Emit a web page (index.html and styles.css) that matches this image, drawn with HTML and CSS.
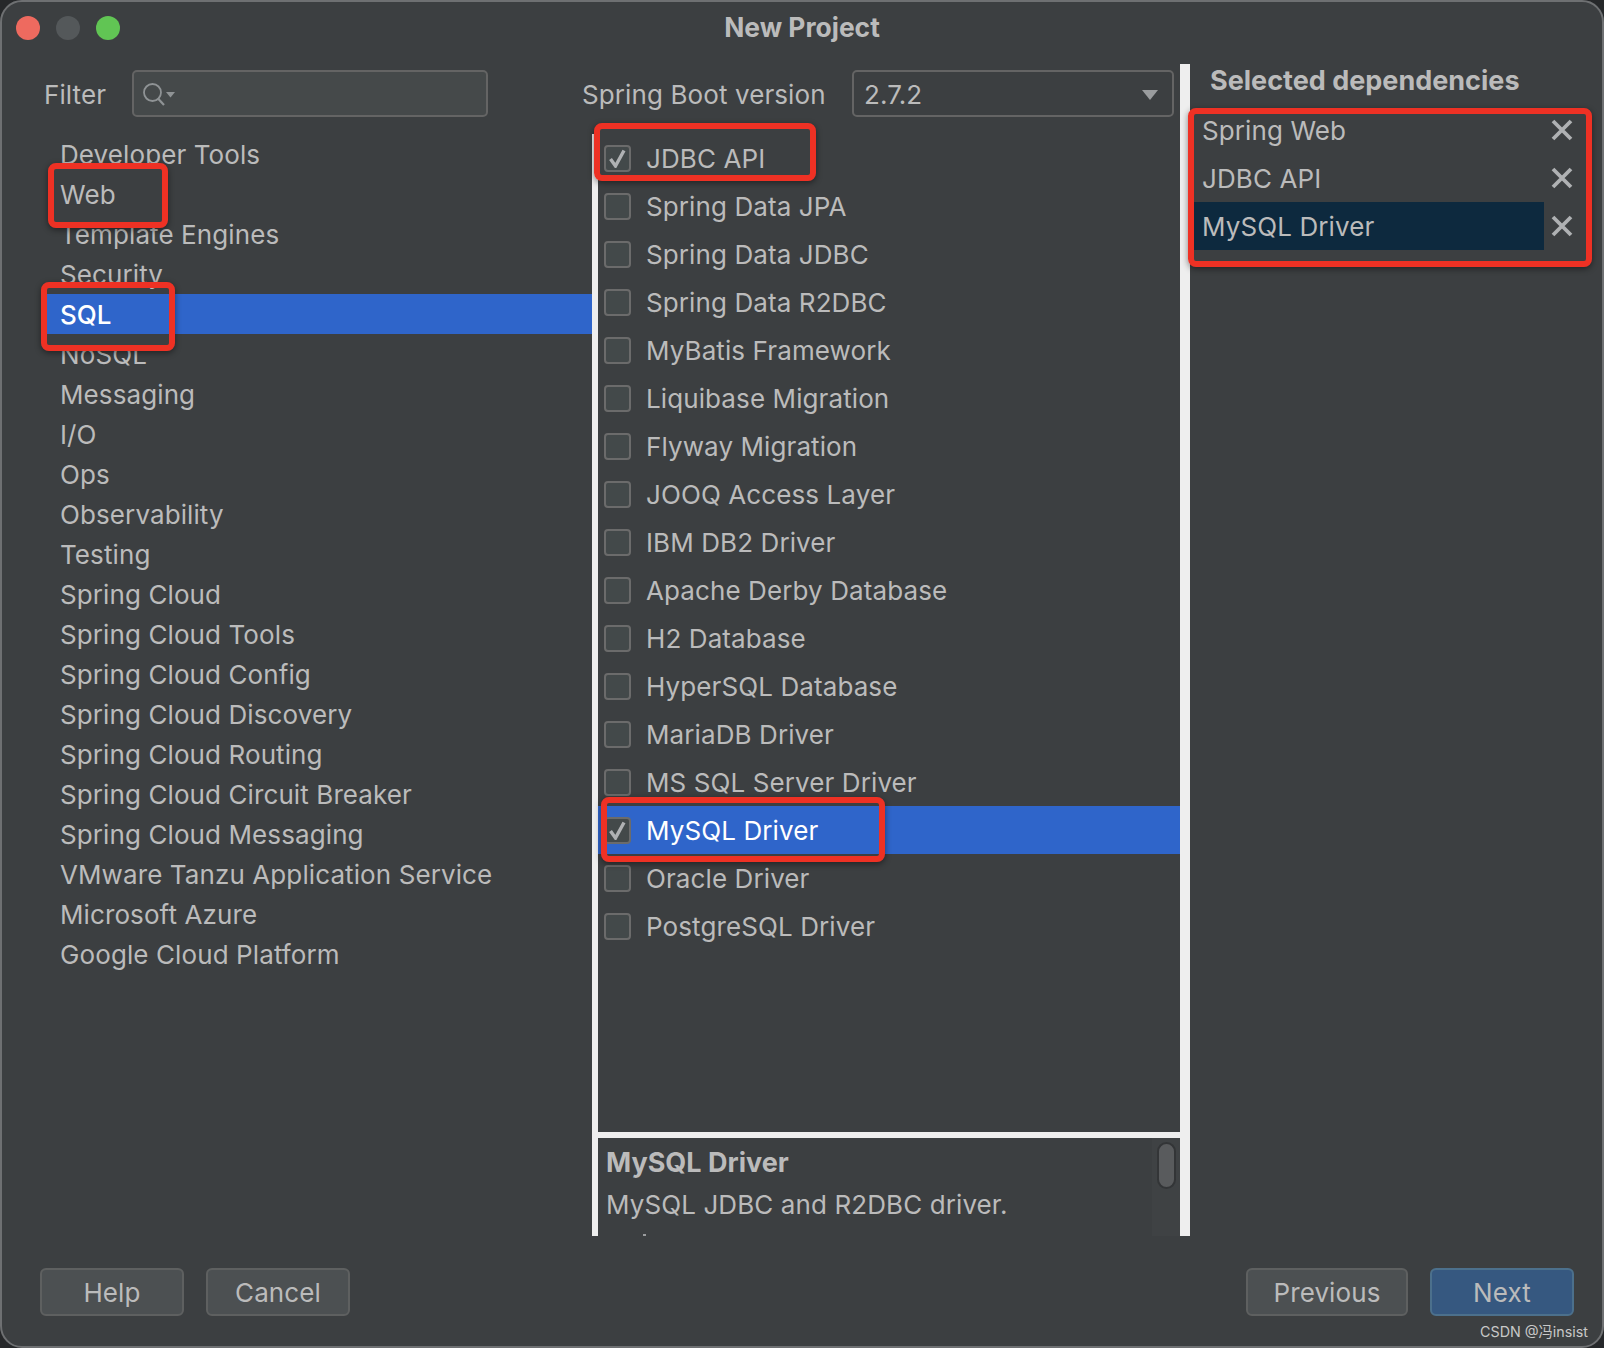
FILE: index.html
```html
<!DOCTYPE html>
<html lang="en">
<head>
    <meta charset="UTF-8">
    <meta name="viewport" content="width=device-width, initial-scale=1.0">
    <title>New Project</title>
    <link rel="stylesheet" href="styles.css">
</head>
<body>
    <div class="window">
        <!-- Title bar -->
        <div class="titlebar">
            <div class="lights">
                <span class="light light-red"></span>
                <span class="light light-gray"></span>
                <span class="light light-green"></span>
            </div>
            <div class="title">New Project</div>
        </div>

        <div class="main">
            <!-- Categories -->
            <div class="categories">
                <div class="filter-row">
                    <span class="filter-label">Filter</span>
                    <div class="search">
                        <svg width="34" height="26" viewBox="0 0 34 26" fill="none">
                            <circle cx="10.5" cy="10.5" r="8.5" stroke="#8f9395" stroke-width="1.8"/>
                            <path d="M16 16.5L22 23" stroke="#8f9395" stroke-width="2.2"/>
                            <path d="M24 10h9l-4.500 5.500z" fill="#8f9395"/>
                        </svg>
                    </div>
                </div>
                <div class="cat-list">
                    <div class="cat">Developer Tools</div>
                    <div class="cat">Web</div>
                    <div class="cat">Template Engines</div>
                    <div class="cat">Security</div>
                    <div class="cat selected">SQL</div>
                    <div class="cat">NoSQL</div>
                    <div class="cat">Messaging</div>
                    <div class="cat">I/O</div>
                    <div class="cat">Ops</div>
                    <div class="cat">Observability</div>
                    <div class="cat">Testing</div>
                    <div class="cat">Spring Cloud</div>
                    <div class="cat">Spring Cloud Tools</div>
                    <div class="cat">Spring Cloud Config</div>
                    <div class="cat">Spring Cloud Discovery</div>
                    <div class="cat">Spring Cloud Routing</div>
                    <div class="cat">Spring Cloud Circuit Breaker</div>
                    <div class="cat">Spring Cloud Messaging</div>
                    <div class="cat">VMware Tanzu Application Service</div>
                    <div class="cat">Microsoft Azure</div>
                    <div class="cat">Google Cloud Platform</div>
                </div>
            </div>

            <!-- Dependencies -->
            <div class="deps">
                <div class="version-row">
                    <span class="version-label">Spring Boot version</span>
                    <div class="combo">
                        <span>2.7.2</span>
                        <span class="combo-arrow"></span>
                    </div>
                </div>
                <div class="dep-box">
                    <div class="dep-list">
                        <div class="dep"><span class="check on"><svg width="19" height="19" viewBox="0 0 19 19" fill="none"><path d="M2.500 10l5 7L16 1.500" stroke="#afb1b3" stroke-width="3.400"/></svg></span>JDBC API</div>
                        <div class="dep"><span class="check"></span>Spring Data JPA</div>
                        <div class="dep"><span class="check"></span>Spring Data JDBC</div>
                        <div class="dep"><span class="check"></span>Spring Data R2DBC</div>
                        <div class="dep"><span class="check"></span>MyBatis Framework</div>
                        <div class="dep"><span class="check"></span>Liquibase Migration</div>
                        <div class="dep"><span class="check"></span>Flyway Migration</div>
                        <div class="dep"><span class="check"></span>JOOQ Access Layer</div>
                        <div class="dep"><span class="check"></span>IBM DB2 Driver</div>
                        <div class="dep"><span class="check"></span>Apache Derby Database</div>
                        <div class="dep"><span class="check"></span>H2 Database</div>
                        <div class="dep"><span class="check"></span>HyperSQL Database</div>
                        <div class="dep"><span class="check"></span>MariaDB Driver</div>
                        <div class="dep"><span class="check"></span>MS SQL Server Driver</div>
                        <div class="dep selected"><span class="check on"><svg width="19" height="19" viewBox="0 0 19 19" fill="none"><path d="M2.500 10l5 7L16 1.500" stroke="#afb1b3" stroke-width="3.400"/></svg></span>MySQL Driver</div>
                        <div class="dep"><span class="check"></span>Oracle Driver</div>
                        <div class="dep"><span class="check"></span>PostgreSQL Driver</div>
                    </div>
                    <div class="detail">
                        <div class="detail-text">
                            <div class="detail-name">MySQL Driver</div>
                            <div class="detail-line">MySQL JDBC and R2DBC driver.</div>
                            <div class="detail-speck"></div>
                        </div>
                        <div class="scrollbar"><div class="thumb"></div></div>
                    </div>
                </div>
            </div>

            <!-- Selected dependencies -->
            <div class="picked">
                <div class="picked-head">Selected dependencies</div>
                <div class="pick">
                    <div class="pick-name">Spring Web</div>
                    <svg class="pick-x" width="22" height="22" viewBox="0 0 22 22"><path d="M2 2l18 18M20 2L2 20" stroke="#afb1b3" stroke-width="3.800"/></svg>
                </div>
                <div class="pick">
                    <div class="pick-name">JDBC API</div>
                    <svg class="pick-x" width="22" height="22" viewBox="0 0 22 22"><path d="M2 2l18 18M20 2L2 20" stroke="#afb1b3" stroke-width="3.800"/></svg>
                </div>
                <div class="pick">
                    <div class="pick-name current">MySQL Driver</div>
                    <svg class="pick-x" width="22" height="22" viewBox="0 0 22 22"><path d="M2 2l18 18M20 2L2 20" stroke="#afb1b3" stroke-width="3.800"/></svg>
                </div>
            </div>
        </div>

        <!-- Buttons -->
        <div class="footer">
            <div class="btn-group">
                <button class="btn btn-small">Help</button>
                <button class="btn btn-small">Cancel</button>
            </div>
            <div class="btn-group">
                <button class="btn btn-prev">Previous</button>
                <button class="btn btn-small btn-primary">Next</button>
            </div>
        </div>

        <div class="watermark">CSDN @冯insist</div>

        <!-- Red annotation boxes drawn over the screenshot -->
        <div class="mark mark-web"></div>
        <div class="mark mark-sql"></div>
        <div class="mark mark-jdbc"></div>
        <div class="mark mark-mysql"></div>
        <div class="mark mark-picked"></div>
    </div>
</body>
</html>
```

FILE: styles.css
```css
* {
    box-sizing: border-box;
}

body {
    margin: 0;
    background-color: #26282a;
    font-family: Inter, "Noto Sans CJK SC", sans-serif;
    font-size: 26px;
    letter-spacing: 0.1px;
    color: #bbbbbb;
}

.window {
    position: relative;
    width: 1604px;
    height: 1348px;
    background-color: #3c3f41;
    border: 2px solid #6e7072;
    border-radius: 22px;
    overflow: hidden;
}

.titlebar {
    position: relative;
    height: 62px;
}

.lights {
    display: flex;
    gap: 16px;
    padding: 14px 0 0 14px;
}

.light {
    width: 24px;
    height: 24px;
    border-radius: 50%;
}

.light-red {
    background-color: #ee6a5f;
}

.light-gray {
    background-color: #54585a;
}

.light-green {
    background-color: #61c554;
}

.title {
    position: absolute;
    top: 10px;
    left: 0;
    right: 0;
    text-align: center;
    font-weight: 700;
    font-size: 26.4px;
    letter-spacing: 0;
    line-height: 30px;
}

.main {
    display: flex;
    height: 1172px;
}

/* left column */
.categories {
    width: 590px;
}

.filter-row {
    display: flex;
    align-items: center;
    height: 47px;
    margin-top: 6px;
    padding-left: 42px;
}

.filter-label {
    width: 88px;
    padding-top: 2px;
}

.search {
    display: flex;
    align-items: center;
    width: 356px;
    height: 47px;
    padding: 2px 0 0 8px;
    background-color: #45494a;
    border: 2px solid #646464;
    border-radius: 5px;
}

.cat-list {
    margin: 17px 0 0 43px;
}

.cat {
    height: 40px;
    line-height: 40px;
    padding: 1px 0 0 15px;
    white-space: nowrap;
}

.cat.selected {
    background-color: #2f65ca;
    color: #ffffff;
    font-weight: 500;
    letter-spacing: 0;
}

/* middle column */
.deps {
    width: 588px;
}

.version-row {
    display: flex;
    align-items: center;
    justify-content: space-between;
    height: 47px;
    margin: 6px 6px 17px -10px;
}

.version-label {
    padding-top: 2px;
}

.combo {
    display: flex;
    align-items: center;
    justify-content: space-between;
    width: 322px;
    height: 47px;
    padding: 2px 14px 0 10px;
    border: 2px solid #646464;
    border-radius: 5px;
}

.combo-arrow {
    width: 0;
    height: 0;
    border-left: 8px solid transparent;
    border-right: 8px solid transparent;
    border-top: 10px solid #9a9c9e;
}

.dep-box {
    display: flex;
    flex-direction: column;
    height: 1102px;
    border-left: 6px solid #eeeeee;
}

.dep-list {
    flex: 1;
}

.dep {
    display: flex;
    align-items: center;
    height: 48px;
    padding-left: 6px;
    white-space: nowrap;
}

.dep.selected {
    background-color: #2f65ca;
    color: #ffffff;
}

.check {
    display: flex;
    align-items: center;
    justify-content: center;
    width: 27px;
    height: 27px;
    margin-right: 15px;
    background-color: #43494a;
    border: 2px solid #6b6b6b;
    border-radius: 4px;
}

.detail {
    display: flex;
    justify-content: space-between;
    height: 104px;
    border-top: 6px solid #eeeeee;
    overflow: hidden;
}

.detail-text {
    padding: 4px 0 0 8px;
}

.detail-name {
    font-weight: 700;
    font-size: 27px;
    letter-spacing: 0;
    line-height: 42px;
}

.detail-line {
    line-height: 42px;
}

/* tiny leftover of the next line, cut by the pane edge */
.detail-speck {
    width: 3px;
    height: 2px;
    margin: 8px 0 0 37px;
    background-color: #9a9c9e;
}

.scrollbar {
    width: 28px;
    padding: 4px 4px 0 5px;
    background-color: #3f4244;
}

.thumb {
    width: 19px;
    height: 47px;
    background-color: #595b5d;
    border: 2px solid #333537;
    border-radius: 10px;
}

/* right column */
.picked {
    flex: 1;
    margin-right: -2px;
    border-left: 10px solid #eeeeee;
}

.picked-head {
    height: 42px;
    padding-left: 20px;
    font-weight: 700;
    font-size: 27px;
    letter-spacing: 0;
    line-height: 34px;
}

.pick {
    display: flex;
    align-items: center;
    height: 48px;
    padding-left: 4px;
}

.pick-name {
    width: 350px;
    height: 48px;
    line-height: 48px;
    padding: 1px 0 0 8px;
}

.pick-name.current {
    background-color: #0d293e;
}

.pick-x {
    margin-left: 7px;
}

/* bottom buttons */
.footer {
    display: flex;
    justify-content: space-between;
    padding: 32px 28px 0 38px;
}

.btn-group {
    display: flex;
    gap: 22px;
}

.btn {
    height: 48px;
    font-family: inherit;
    font-size: 26px;
    letter-spacing: inherit;
    color: #bbbbbb;
    background-color: #4c5052;
    border: 2px solid #5e6060;
    border-radius: 6px;
}

.btn-small {
    width: 144px;
}

.btn-prev {
    width: 162px;
}

.btn-primary {
    background-color: #365880;
    border-color: #4c708c;
}

.watermark {
    position: absolute;
    right: 14px;
    bottom: 5px;
    font-size: 14.3px;
    letter-spacing: 0;
    line-height: 18px;
    color: #c8c8c8;
}

/* annotation boxes */
.mark {
    position: absolute;
    border: 6px solid #ee3124;
    border-radius: 8px;
    box-shadow: 0 2px 6px rgba(0, 0, 0, 0.45);
}

.mark-web {
    left: 46px;
    top: 161px;
    width: 120px;
    height: 65px;
}

.mark-sql {
    left: 39px;
    top: 280px;
    width: 134px;
    height: 69px;
}

.mark-jdbc {
    left: 592px;
    top: 121px;
    width: 222px;
    height: 58px;
}

.mark-mysql {
    left: 599px;
    top: 795px;
    width: 284px;
    height: 65px;
}

.mark-picked {
    left: 1186px;
    top: 106px;
    width: 404px;
    height: 159px;
}
```
